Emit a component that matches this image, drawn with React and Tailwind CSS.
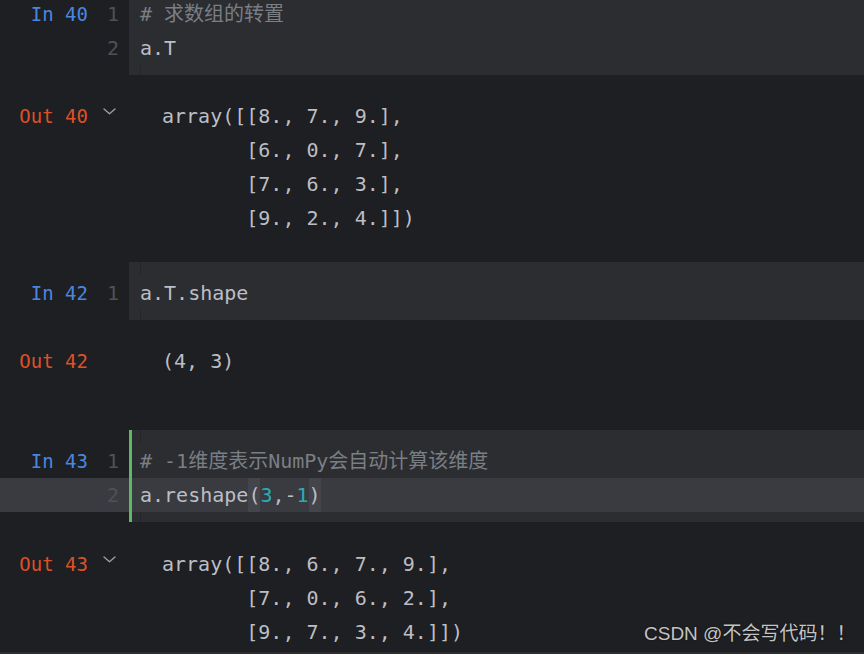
import React from "react";

const MONO = "font-['DejaVu_Sans_Mono','Noto_Sans_CJK_SC',monospace]";

function Chevron() {
  return (
    <svg width="13" height="7" viewBox="0 0 13 7" className="block">
      <polyline points="1,1 6.5,5.8 12,1" fill="none" stroke="#9a9da3" strokeWidth="1.4" strokeLinecap="round" strokeLinejoin="round" />
    </svg>
  );
}

function PadRow({ h, active }) {
  return (
    <div className={`flex ${h}`}>
      <div className="w-[129px]" />
      <div className={`flex-1 bg-[#2b2d30] flex ${active ? "border-l-[3px] border-[#5fb865] pl-[8px]" : "pl-[11px]"}`}>
        <div className="w-px h-full bg-[#25262a]" />
      </div>
    </div>
  );
}

function CodeCell({ label, lines, active, currentLine, className = "" }) {
  return (
    <div className={`flex flex-col ${className}`}>
      <PadRow h="h-[14px]" active={active} />
      {lines.map((line, i) => {
        const cur = currentLine === i;
        return (
          <div key={i} className={`flex h-[34px] items-stretch ${cur ? "bg-[#393b40]" : ""}`}>
            <div className="w-[88px] text-right text-[19px] text-[#4a86e0] leading-[34px] whitespace-pre">{i === 0 ? label : ""}</div>
            <div className="w-[31px] text-right text-[#4e5157] leading-[34px]">{i + 1}</div>
            <div className="w-[10px]" />
            <div
              className={`flex-1 flex items-stretch leading-[34px] whitespace-pre ${cur ? "" : "bg-[#2b2d30]"} ${
                active ? "border-l-[3px] border-[#5fb865] pl-[8px]" : "pl-[11px]"
              }`}
            >
              {line}
            </div>
          </div>
        );
      })}
      <PadRow h="h-[10px]" active={active} />
    </div>
  );
}

function OutBlock({ label, lines, chevron, className = "" }) {
  return (
    <div className={`flex ${className}`}>
      <div className="w-[88px] text-right text-[19px] text-[#dc5127] leading-[34px] whitespace-pre">{label}</div>
      <div className="w-[74px] pl-[15px] pt-[9px]">{chevron ? <Chevron /> : null}</div>
      <div className="flex flex-col text-[#bcbec4]">
        {lines.map((l, i) => (
          <div key={i} className="h-[34px] leading-[34px] whitespace-pre">
            {l}
          </div>
        ))}
      </div>
    </div>
  );
}

export default function App() {
  const comment = (t) => <span className="text-[#7a7e85]">{t}</span>;
  const code = (t) => <span className="text-[#bcbec4]">{t}</span>;
  const num = (t) => <span className="text-[#2aacb8]">{t}</span>;

  return (
    <div className={`relative w-[864px] h-[654px] overflow-hidden bg-[#1e1f22] text-[20px] ${MONO}`}>
      <CodeCell
        className="-mt-[17px]"
        label="In 40"
        lines={[comment("# 求数组的转置"), code("a.T")]}
      />
      <OutBlock
        className="mt-[24px]"
        label="Out 40"
        chevron
        lines={["array([[8., 7., 9.],", "       [6., 0., 7.],", "       [7., 6., 3.],", "       [9., 2., 4.]])"]}
      />
      <CodeCell className="mt-[27px]" label="In 42" lines={[code("a.T.shape")]} />
      <OutBlock className="mt-[24px]" label="Out 42" lines={["(4, 3)"]} />
      <CodeCell
        className="mt-[52px]"
        label="In 43"
        active
        currentLine={1}
        lines={[
          comment("# -1维度表示NumPy会自动计算该维度"),
          <span className="flex items-stretch">
            <span className="text-[#bcbec4]">a.reshape</span>
            <span className="text-[#bcbec4] bg-[#43454a]">(</span>
            {num("3")}
            <span className="text-[#bcbec4]">,-</span>
            {num("1")}
            <span className="text-[#bcbec4] bg-[#43454a]">)</span>
          </span>,
        ]}
      />
      <OutBlock
        className="mt-[25px]"
        label="Out 43"
        chevron
        lines={["array([[8., 6., 7., 9.],", "       [7., 0., 6., 2.],", "       [9., 7., 3., 4.]])"]}
      />
      <div className="absolute left-0 right-0 bottom-0 h-[2px] bg-[#2b2d30]" />
      <div className="absolute left-[644px] top-[620px] text-[19px] leading-[28px] text-[#c4c4c4] font-['Liberation_Sans','Noto_Sans_CJK_SC',sans-serif] whitespace-pre [text-shadow:0_0_2px_rgba(0,0,0,0.6)]">
        CSDN @不会写代码！！
      </div>
    </div>
  );
}
